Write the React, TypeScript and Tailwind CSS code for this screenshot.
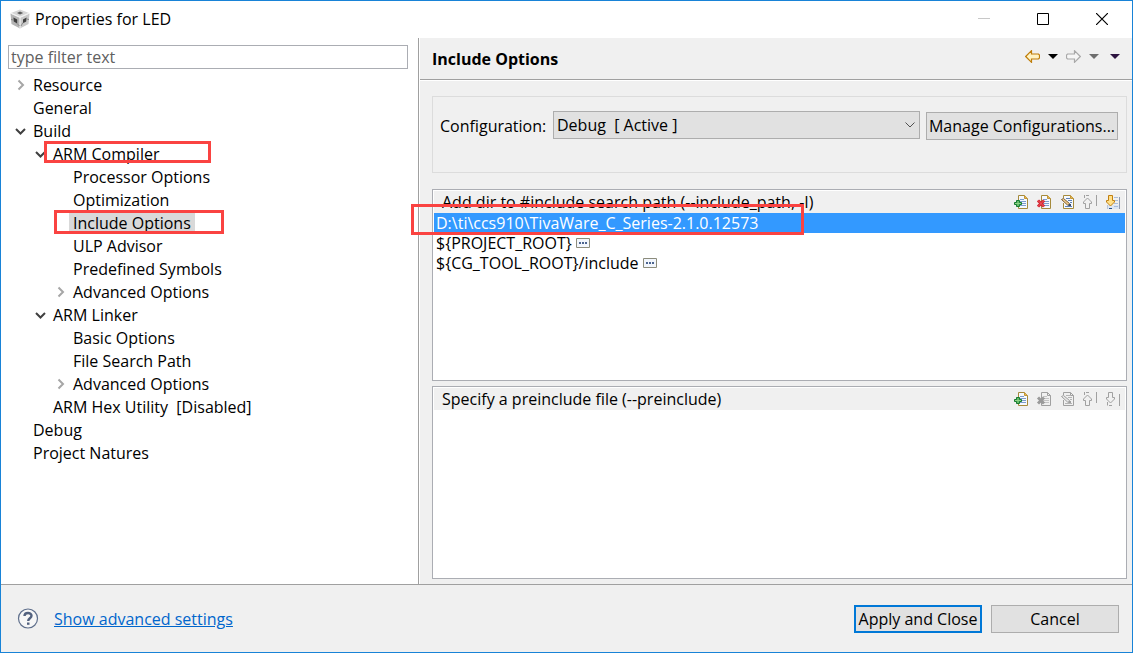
import { useState } from "react";

type Node = {
  label: string;
  level: number;
  state?: "open" | "closed";
  mark?: "compiler" | "include";
};

const nodes: Node[] = [
  { label: "Resource", level: 0, state: "closed" },
  { label: "General", level: 0 },
  { label: "Build", level: 0, state: "open" },
  { label: "ARM Compiler", level: 1, state: "open", mark: "compiler" },
  { label: "Processor Options", level: 2 },
  { label: "Optimization", level: 2 },
  { label: "Include Options", level: 2, mark: "include" },
  { label: "ULP Advisor", level: 2 },
  { label: "Predefined Symbols", level: 2 },
  { label: "Advanced Options", level: 2, state: "closed" },
  { label: "ARM Linker", level: 1, state: "open" },
  { label: "Basic Options", level: 2 },
  { label: "File Search Path", level: 2 },
  { label: "Advanced Options", level: 2, state: "closed" },
  { label: "ARM Hex Utility\u00a0 [Disabled]", level: 1 },
  { label: "Debug", level: 0 },
  { label: "Project Natures", level: 0 },
];

const indent = ["pl-[10px]", "pl-[30px]", "pl-[50px]"];

function CubeIcon() {
  return (
    <svg width="20" height="20" viewBox="0 0 20 20" aria-hidden="true">
      <path d="M10 0.5 19 4 10 8 1 4z" fill="#d6d6d6" />
      <path d="M0.5 4.5 10 8.5V19.5L1.5 15z" fill="#b4b4b4" />
      <path d="M19.5 4.5 10 8.5V19.5L18.5 15z" fill="#c9c9c9" />
      <path d="M1 4.3 10 8.3 19 4.3M10 8.3V19" fill="none" stroke="#f1f1f1" strokeWidth="1.2" />
      <path d="M7 4 10 2.6 13.2 4 10 5.6z" fill="#5d5d5d" />
      <path d="M3.4 8.4 7.2 10.4V14.4L3.8 12.4z" fill="#3f3f3f" />
      <path d="M16.6 8.4 13 10.4V14.2L16.2 12.4z" fill="#3f3f3f" />
      <path d="M1 10.5 3.5 11M7 14.5 9.5 17M13 13.5 11 17M16.5 10 19 10.5" stroke="#8a8a8a" strokeWidth="1" />
    </svg>
  );
}

function Chevron({ open }: { open: boolean }) {
  return (
    <svg width="18" height="12" viewBox="0 0 18 12" fill="none" aria-hidden="true">
      {open ? (
        <path d="M5 4 9.500 8.500 14 4" stroke="#404040" strokeWidth="2" />
      ) : (
        <path d="M7.500 1.500 12 6 7.500 10.500" stroke="#a6a6a6" strokeWidth="2" />
      )}
    </svg>
  );
}

function Page({ off }: { off?: boolean }) {
  return (
    <>
      <path d="M5.500 1.500H11.500L14.500 4.500V14.500H5.500z" fill={off ? "#f0f0f0" : "#f5f9ff"} stroke={off ? "#a0a0a0" : "#a58a3c"} />
      <path d="M11.500 1.500V4.500H14.500" fill={off ? "none" : "#e8b850"} stroke={off ? "#a0a0a0" : "#c09538"} />
      <path d="M7 5.500H11M7 7.500H13M7 9.500H13M7 11.500H13" stroke={off ? "#c4c4c4" : "#7c9ccc"} />
    </>
  );
}

function AddIcon() {
  return (
    <svg width="16" height="16" viewBox="0 0 16 16" aria-hidden="true">
      <Page />
      <path d="M3.500 6.500H6.500V8.500H8.500V10.500H6.500V12.500H3.500V10.500H1.500V8.500H3.500z" fill="#3fa34d" stroke="#167a2f" />
      <path d="M5 7V12M2 9.500H8" stroke="#8fd487" />
    </svg>
  );
}

function DeleteIcon({ off }: { off?: boolean }) {
  return (
    <svg width="16" height="16" viewBox="0 0 16 16" aria-hidden="true">
      <Page off={off} />
      <path d="M2 6.500 8 12.500M8 6.500 2 12.500" stroke={off ? "#9a9a9a" : "#d3202c"} strokeWidth="3" />
      {!off && <path d="M2 6.500 8 12.500M8 6.500 2 12.500" stroke="#ef5f66" />}
    </svg>
  );
}

function EditIcon({ off }: { off?: boolean }) {
  return (
    <svg width="16" height="16" viewBox="0 0 16 16" aria-hidden="true">
      <path d="M4.500 4V1.500H11.500L14.500 4.500V14.500H4.500V9" fill={off ? "#f0f0f0" : "#f5f9ff"} stroke={off ? "#a0a0a0" : "#a58a3c"} />
      <path d="M11.500 1.500V4.500H14.500" fill={off ? "none" : "#e8b850"} stroke={off ? "#a0a0a0" : "#c09538"} />
      <path d="M7 4.500H11M9 6.500H13M11 8.500H13M6 12.500H13" stroke={off ? "#b4b4b4" : "#5d80b8"} />
      <path d="M2.500 5.500 4.500 4.500 10.500 9.500 11.500 11.500 8.500 11z" fill={off ? "#e6e6e6" : "#f0c888"} stroke={off ? "#a0a0a0" : "#7d6238"} />
      <path d="M9.500 10H12V12H9.500z" fill={off ? "#a0a0a0" : "#3a4a68"} />
    </svg>
  );
}

function UpIcon() {
  return (
    <svg width="16" height="16" viewBox="0 0 16 16" fill="none" stroke="#a0a0a0" aria-hidden="true">
      <path d="M5.500 4 9.500 8V9.500H7.500V14.500H3.500V9.500H1.500V8z" />
      <path d="M2.500 1V4M4 1.500H7M14.500 1V12" />
    </svg>
  );
}

function DownIcon({ off }: { off?: boolean }) {
  if (off) {
    return (
      <svg width="16" height="16" viewBox="0 0 16 16" fill="none" stroke="#a0a0a0" aria-hidden="true">
        <path d="M5.500 12 9.500 8V6.500H7.500V1.500H3.500V6.500H1.500V8z" />
        <path d="M2.500 11V14.500M4 14.500H7M14.500 3V15" />
      </svg>
    );
  }
  return (
    <svg width="16" height="16" viewBox="0 0 16 16" aria-hidden="true">
      <path d="M2 11H14V15H2z" fill="#dce6f4" />
      <path d="M9 3.500H13M10 6.500H13M9 9.500H13M9 12.500H13" stroke="#a9bedd" />
      <path d="M14.500 3V15" stroke="#8f9bb0" />
      <path d="M2.500 11V15" stroke="#b8c4d8" />
      <path d="M4 14.500H7" stroke="#24508c" />
      <path d="M5.500 12 9.500 8V6.500H7.500V1.500H3.500V6.500H1.500V8z" fill="#ffe08a" stroke="#c07f10" />
    </svg>
  );
}

function NavArrow({ forward }: { forward?: boolean }) {
  return forward ? (
    <svg width="15" height="13" viewBox="0 0 15 13" aria-hidden="true">
      <path d="M14.300 6.500 8.500 0.700V4H1.500L0.500 5V8L1.500 9H8.500V12.300z" fill="#f6f6f6" stroke="#a8a8a8" strokeWidth="1.200" />
    </svg>
  ) : (
    <svg width="15" height="13" viewBox="0 0 15 13" aria-hidden="true">
      <path d="M0.700 6.500 6.500 0.700V4H13.500L14.500 5V8L13.500 9H6.500V12.300z" fill="#fff3c4" stroke="#bf7d0a" strokeWidth="1.200" />
    </svg>
  );
}

function Caret({ fill }: { fill: string }) {
  return (
    <svg width="10" height="5" viewBox="0 0 10 5" aria-hidden="true">
      <path d="M0 0H10L5 5z" fill={fill} />
    </svg>
  );
}

function VariableIcon() {
  return (
    <svg width="14" height="10" viewBox="0 0 14 10" aria-hidden="true">
      <path d="M0.500 0.500H13.500V9.500H0.500z" fill="#f2f6fc" stroke="#8c8c7c" />
      <path d="M3 4H5V6H3zM6 4H8V6H6zM9 4H11V6H9z" fill="#4b6490" />
    </svg>
  );
}

function ListPanel({ title, filled, children }: { title: string; filled?: boolean; children?: React.ReactNode }) {
  return (
    <section className="relative min-h-0 border border-[#abadb3] bg-white p-px">
      <div className="flex h-[22px] items-center justify-between bg-[#f0f0f0] pr-1 pl-2">
        <h2>{title}</h2>
        <div className="flex gap-[7px]">
          <button aria-label="Add"><AddIcon /></button>
          <button aria-label="Delete" disabled={!filled}><DeleteIcon off={!filled} /></button>
          <button aria-label="Edit" disabled={!filled}><EditIcon off={!filled} /></button>
          <button aria-label="Move Up" disabled><UpIcon /></button>
          <button aria-label="Move Down" disabled={!filled}><DownIcon off={!filled} /></button>
        </div>
      </div>
      {children}
    </section>
  );
}

export default function App() {
  const [selected, setSelected] = useState(6);
  const [filter, setFilter] = useState("");

  return (
    <div className="flex h-screen flex-col border border-[#1883d7] bg-[#f0f0f0] font-['Open_Sans','Noto_Sans',sans-serif] text-base leading-5 text-black">
      {/* Title bar */}
      <header className="flex h-[37px] shrink-0 items-center justify-between bg-white pr-px pb-px pl-[9px]">
        <div className="flex items-center gap-[5px]">
          <CubeIcon />
          <h1>Properties for LED</h1>
        </div>
        <div className="flex">
          <button aria-label="Minimize" disabled className="flex w-[59px] justify-center">
            <svg width="12" height="12" viewBox="0 0 12 12"><path d="M0 5.500H12" stroke="#c8c8c8" /></svg>
          </button>
          <button aria-label="Maximize" className="flex w-[59px] justify-center">
            <svg width="12" height="12" viewBox="0 0 12 12"><path d="M0.500 0.500H11.500V11.500H0.500z" fill="none" stroke="#000" /></svg>
          </button>
          <button aria-label="Close" className="flex w-[59px] justify-center">
            <svg width="12" height="12" viewBox="0 0 12 12"><path d="M0 0 12 12M12 0 0 12" stroke="#000" strokeWidth="1.200" /></svg>
          </button>
        </div>
      </header>

      <main className="flex min-h-0 flex-1">
        {/* Category tree */}
        <aside className="w-[418px] shrink-0 border-r border-[#a0a0a0] bg-white pt-[7px]">
          <input
            type="text"
            aria-label="type filter text"
            placeholder="type filter text"
            value={filter}
            onChange={(e) => setFilter(e.target.value)}
            className="mr-[10px] ml-[7px] block h-6 w-[400px] border border-[#abadb3] px-[2px] placeholder:text-[#606060]"
          />
          <ul className="pt-1">
            {nodes.map((node, i) => (
              <li key={i} className={`relative flex h-[23px] items-center ${indent[node.level]}`}>
                <span className="flex w-[18px] shrink-0">
                  {node.state && <Chevron open={node.state === "open"} />}
                </span>
                <button
                  onClick={() => setSelected(i)}
                  className={`h-[23px] px-1 whitespace-nowrap ${i === selected ? "bg-[#d9d9d9]" : ""}`}
                >
                  {node.label}
                </button>
                {node.mark === "compiler" && (
                  <span className="pointer-events-none absolute -top-px left-[43px] h-[22px] w-[167px] border-3 border-[#fa4341]"></span>
                )}
                {node.mark === "include" && (
                  <span className="pointer-events-none absolute -top-px left-[53px] h-6 w-[170px] border-3 border-[#fa4341]"></span>
                )}
              </li>
            ))}
          </ul>
        </aside>

        {/* Include Options page */}
        <div className="flex min-w-0 flex-1 flex-col border-l border-white">
          <div className="flex h-[42px] shrink-0 items-center justify-between border-b border-[#a0a0a0] pr-3 pl-3">
            <h2 className="font-bold">Include Options</h2>
            <div className="flex items-center gap-2 pb-1">
              <button aria-label="Back"><NavArrow /></button>
              <button aria-label="Back history"><Caret fill="#000" /></button>
              <button aria-label="Forward" disabled><NavArrow forward /></button>
              <button aria-label="Forward history" disabled><Caret fill="#6e6e6e" /></button>
              <button aria-label="Menu" className="ml-[3px]"><Caret fill="#2d1440" /></button>
            </div>
          </div>

          <div className="flex min-h-0 flex-1 flex-col border-t border-white pt-[15px] pr-[5px] pb-[5px] pl-3">
            <div className="mb-4 flex h-[77px] shrink-0 items-start border border-[#dcdcdc] px-[7px] pt-[14px]">
              <label htmlFor="configuration" className="w-[113px] shrink-0 pt-[5px]">Configuration:</label>
              <div className="relative min-w-0 flex-1">
                <select
                  id="configuration"
                  className="block h-7 w-full appearance-none border border-[#adadad] bg-[#e1e1e1] px-[3px]"
                >
                  <option>Debug&nbsp; [ Active ]</option>
                </select>
                <svg className="pointer-events-none absolute top-[11px] right-[5px]" width="10" height="6" viewBox="0 0 10 6">
                  <path d="M0.500 0.500 5 5 9.500 0.500" fill="none" stroke="#505050" />
                </svg>
              </div>
              <button className="mt-px mr-px ml-[6px] h-7 w-[192px] shrink-0 border border-[#adadad] bg-[#e1e1e1] whitespace-nowrap">
                Manage Configurations...
              </button>
            </div>

            <div className="grid min-h-0 flex-1 grid-rows-[192fr_193fr] gap-[5px]">
              <ListPanel title="Add dir to #include search path (--include_path, -I)" filled>
                <ul>
                  <li className="h-5 bg-[#3399ff] px-[2px] text-white">D:\ti\ccs910\TivaWare_C_Series-2.1.0.12573</li>
                  <li className="flex h-5 items-center gap-1 px-[2px]">{"${PROJECT_ROOT}"} <VariableIcon /></li>
                  <li className="flex h-5 items-center gap-1 px-[2px]">{"${CG_TOOL_ROOT}/include"} <VariableIcon /></li>
                </ul>
                <span className="pointer-events-none absolute top-[14px] -left-[22px] h-[31px] w-[393px] border-3 border-[#fa4341]"></span>
              </ListPanel>
              <ListPanel title="Specify a preinclude file (--preinclude)" />
            </div>
          </div>
        </div>
      </main>

      {/* Button bar */}
      <footer className="flex h-[68px] shrink-0 items-center border-t border-[#a0a0a0] pr-[13px] pl-4">
        <button aria-label="Help" className="mr-[15px]">
          <svg width="22" height="22" viewBox="0 0 22 22" fill="none">
            <circle cx="11" cy="10.500" r="9.500" fill="#f7f7f7" stroke="#5f6f8c" strokeWidth="1.200" />
            <path d="M7.500 8C7.500 4 14.500 4 14.500 7.800 14.500 10.300 11.200 10.300 11.200 13" stroke="#53627f" strokeWidth="2.400" />
            <path d="M10 14.500H12.500V16.800H10z" fill="#53627f" />
          </svg>
        </button>
        <a href="#advanced" className="text-[#0066cc] underline">Show advanced settings</a>
        <div className="ml-auto flex gap-[9px]">
          <button className="h-7 w-32 border-2 border-[#0078d7] bg-[#e1e1e1] whitespace-nowrap">Apply and Close</button>
          <button className="h-7 w-32 border border-[#adadad] bg-[#e1e1e1]">Cancel</button>
        </div>
      </footer>
    </div>
  );
}
